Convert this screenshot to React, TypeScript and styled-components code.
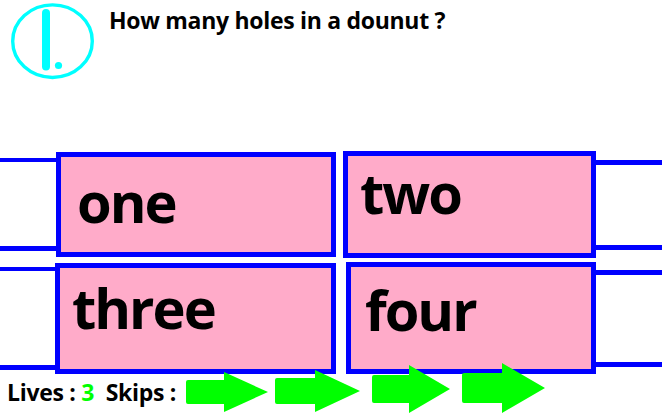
import React from 'react';
import styled, { createGlobalStyle } from 'styled-components';

const GlobalStyle = createGlobalStyle`
  html, body {
    margin: 0;
    padding: 0;
    background: #ffffff;
  }
  body {
    width: 662px;
    height: 413px;
    overflow: hidden;
    font-family: 'Open Sans', 'Liberation Sans', sans-serif;
    font-weight: 700;
    color: #000000;
  }
`;

const Page = styled.div`
  display: flex;
  flex-direction: column;
  width: 662px;
  height: 413px;
  overflow: hidden;
`;

const Header = styled.div`
  display: flex;
  align-items: flex-start;
  padding: 3px 0 0 11px;
  height: 148px;
  box-sizing: border-box;
`;

const Question = styled.h1`
  margin: 0 0 0 12px;
  font-size: 23px;
  line-height: 1;
  padding-top: 6px;
  letter-spacing: -0.3px;
`;

const AnswerRow = styled.div<{ $mt: number }>`
  display: flex;
  align-items: center;
  margin-top: ${(p) => p.$mt}px;
`;

const Stub = styled.div<{ $w: number; $h: number; $top: number; $bottom: number }>`
  flex: 0 0 ${(p) => p.$w}px;
  height: ${(p) => p.$h}px;
  box-sizing: border-box;
  border-top: ${(p) => p.$top}px solid #0000ff;
  border-bottom: ${(p) => p.$bottom}px solid #0000ff;
`;

const AnswerBox = styled.div<{ $w: number; $h: number; $pl: number; $pt: number; $ml?: number }>`
  flex: 0 0 ${(p) => p.$w}px;
  height: ${(p) => p.$h}px;
  margin-left: ${(p) => p.$ml ?? 0}px;
  box-sizing: border-box;
  border: 5px solid #0000ff;
  background: #ffabc9;
  padding: ${(p) => p.$pt}px 0 0 ${(p) => p.$pl}px;
  font-size: 56px;
  line-height: 1;
  letter-spacing: -2px;
`;

const StatusBar = styled.div`
  display: flex;
  align-items: center;
  height: 40px;
  margin-top: -2px;
  padding-left: 7px;
  position: relative;
  font-size: 23px;
  white-space: pre;
`;

const Label = styled.span`
  letter-spacing: -0.3px;
`;

const Count = styled.span`
  color: #00ff00;
`;

const Arrows = styled.div`
  display: flex;
  align-items: center;
  margin-left: 8px;
`;

const ArrowSvg = styled.svg<{ $ml: number; $lift: number }>`
  display: block;
  margin-left: ${(p) => p.$ml}px;
  margin-bottom: ${(p) => p.$lift * 2}px;
  flex: none;
`;

const NumberBadge = () => (
  <svg width="86" height="80" viewBox="0 0 86 80">
    <ellipse cx="41.5" cy="38.2" rx="39.8" ry="36.3" fill="none" stroke="#00ffff" strokeWidth="3.4" />
    <line x1="35" y1="10" x2="35" y2="63.5" stroke="#00ffff" strokeWidth="8" strokeLinecap="round" />
    <circle cx="47.5" cy="62.5" r="3.6" fill="#00ffff" />
  </svg>
);

type ArrowProps = { w: number; h: number; bodyW: number; bodyH: number; ml: number; lift: number };

const Arrow = ({ w, h, bodyW, bodyH, ml, lift }: ArrowProps) => {
  const cy = h / 2;
  const top = cy - bodyH / 2;
  const bottom = cy + bodyH / 2;
  return (
    <ArrowSvg $ml={ml} $lift={lift} width={w} height={h} viewBox={`0 0 ${w} ${h}`}>
      <path
        d={`M2 ${top + 2} Q2 ${top} 4 ${top} L${bodyW} ${top} L${bodyW} 1 L${w - 1} ${cy} L${bodyW} ${h - 1} L${bodyW} ${bottom} L4 ${bottom} Q2 ${bottom} 2 ${bottom - 2} Z`}
        fill="#00ff00"
      />
    </ArrowSvg>
  );
};

const skips: ArrowProps[] = [
  { w: 85, h: 42, bodyW: 40, bodyH: 24, ml: 0, lift: 0 },
  { w: 88, h: 44, bodyW: 42, bodyH: 26, ml: 4, lift: 1 },
  { w: 81, h: 50, bodyW: 39, bodyH: 28, ml: 9, lift: 3 },
  { w: 86, h: 52, bodyW: 42, bodyH: 30, ml: 9, lift: 4 },
];

export default function App() {
  return (
    <Page>
      <GlobalStyle />
      <Header>
        <NumberBadge />
        <Question>How many holes in a dounut ?</Question>
      </Header>

      <AnswerRow $mt={3}>
        <Stub $w={56} $h={93} $top={4} $bottom={5} />
        <AnswerBox $w={280} $h={105} $pl={16} $pt={16}>one</AnswerBox>
        <AnswerBox $w={253} $h={107} $pl={12} $pt={8} $ml={7}>two</AnswerBox>
        <Stub $w={66} $h={90} $top={5} $bottom={5} />
      </AnswerRow>

      <AnswerRow $mt={4}>
        <Stub $w={55} $h={103} $top={4} $bottom={5} />
        <AnswerBox $w={281} $h={111} $pl={12} $pt={11}>three</AnswerBox>
        <AnswerBox $w={250} $h={112} $pl={14} $pt={14} $ml={10}>four</AnswerBox>
        <Stub $w={66} $h={97} $top={5} $bottom={5} />
      </AnswerRow>

      <StatusBar>
        <Label>Lives : </Label>
        <Count>3</Count>
        <Label>  Skips :</Label>
        <Arrows>
          {skips.map((a, i) => (
            <Arrow key={i} {...a} />
          ))}
        </Arrows>
      </StatusBar>
    </Page>
  );
}
